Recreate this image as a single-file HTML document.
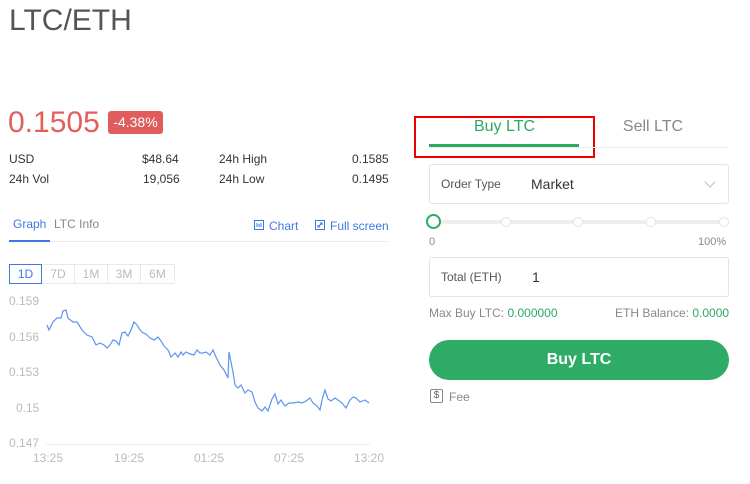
<!DOCTYPE html>
<html><head><meta charset="utf-8"><style>
*{margin:0;padding:0;box-sizing:border-box}
body{width:750px;height:484px;background:#fff;font-family:"Liberation Sans",Arial,sans-serif;position:relative;overflow:hidden;color:#333}
.a{position:absolute;white-space:nowrap}
</style></head><body>
<div class="a" style="left:9px;top:4px;font-size:30px;color:#555">LTC/ETH</div>
<div class="a" style="left:8px;top:106px;font-size:30px;color:#e45e5e">0.1505</div>
<div class="a" style="left:108px;top:111px;width:55px;height:23px;background:#e05d5d;border-radius:3px;color:#fff;font-size:14px;line-height:23px;text-align:center">-4.38%</div>
<div class="a" style="left:9px;top:152px;font-size:12px">USD</div>
<div class="a" style="left:142px;top:152px;font-size:12px">$48.64</div>
<div class="a" style="left:219px;top:152px;font-size:12px">24h High</div>
<div class="a" style="left:352px;top:152px;font-size:12px">0.1585</div>
<div class="a" style="left:9px;top:172px;font-size:12px">24h Vol</div>
<div class="a" style="left:143px;top:172px;font-size:12px">19,056</div>
<div class="a" style="left:219px;top:172px;font-size:12px">24h Low</div>
<div class="a" style="left:352px;top:172px;font-size:12px">0.1495</div>
<div class="a" style="left:13px;top:217px;font-size:12px;color:#3b7be0">Graph</div>
<div class="a" style="left:54px;top:217px;font-size:12px;color:#888">LTC Info</div>
<div class="a" style="left:9px;top:241px;width:380px;height:1px;background:#eee"></div>
<div class="a" style="left:9px;top:240px;width:41px;height:2px;background:#3b7be0"></div>
<svg class="a" style="left:254px;top:220px" width="10" height="10"><rect x="0.5" y="0.5" width="9" height="9" fill="none" stroke="#3b7be0"/><path d="M3 3v4M5 4v3M7 3v4" stroke="#3b7be0"/></svg>
<div class="a" style="left:269px;top:219px;font-size:12px;color:#3b7be0">Chart</div>
<svg class="a" style="left:315px;top:220px" width="10" height="10"><rect x="0.5" y="0.5" width="9" height="9" fill="none" stroke="#3b7be0"/><path d="M3 7l4-4M3 5v2h2M7 5V3H5" stroke="#3b7be0" fill="none"/></svg>
<div class="a" style="left:330px;top:219px;font-size:12px;color:#3b7be0">Full screen</div>
<div class="a" style="left:9px;top:264px;width:166px;height:20px;border:1px solid #e8e8e8;border-radius:2px;display:flex;font-size:12px;color:#bbb;line-height:18px">
<div style="width:33px;text-align:center;border:1px solid #3b7be0;color:#3b7be0;margin:-1px 0 -1px -1px">1D</div>
<div style="width:33px;text-align:center;border-right:1px solid #e8e8e8">7D</div>
<div style="width:33px;text-align:center;border-right:1px solid #e8e8e8">1M</div>
<div style="width:33px;text-align:center;border-right:1px solid #e8e8e8">3M</div>
<div style="width:33px;text-align:center">6M</div></div>
<div class="a" style="left:9px;top:294px;font-size:12px;color:#bbb">0.159</div>
<div class="a" style="left:9px;top:330px;font-size:12px;color:#bbb">0.156</div>
<div class="a" style="left:9px;top:365px;font-size:12px;color:#bbb">0.153</div>
<div class="a" style="left:16px;top:401px;font-size:12px;color:#bbb">0.15</div>
<div class="a" style="left:9px;top:436px;font-size:12px;color:#bbb">0.147</div>
<div class="a" style="left:46px;top:444px;width:324px;height:1px;background:#eee"></div>
<div class="a" style="left:33px;top:451px;font-size:12px;color:#bbb">13:25</div>
<div class="a" style="left:114px;top:451px;font-size:12px;color:#bbb">19:25</div>
<div class="a" style="left:194px;top:451px;font-size:12px;color:#bbb">01:25</div>
<div class="a" style="left:274px;top:451px;font-size:12px;color:#bbb">07:25</div>
<div class="a" style="left:354px;top:451px;font-size:12px;color:#bbb">13:20</div>
<svg class="a" style="left:0;top:0" width="400" height="484"><polyline fill="none" stroke="#5b95ee" stroke-width="1.2" points="47,325 49,330 53,322 57,318 61,318 63,311 66,310 68,318 73,322 77,322 82,330 87,335 92,337 96,345 100,343 104,345 107,348 110,345 113,340 116,341 119,345 122,333 125,332 128,336 131,330 134,322 137,325 140,330 143,333 146,334 150,338 154,340 158,337 161,341 164,346 168,350 171,357 175,353 178,357 181,352 183,355 186,352 190,354 194,355 197,350 200,353 203,353 206,352 210,355 213,350 216,357 220,365 224,370 228,378 229,352 233,372 235,385 238,388 241,385 245,393 248,390 252,392 255,402 258,408 262,411 265,407 268,411 272,399 275,394 278,404 281,400 285,406 289,403 293,403 298,402 302,403 306,401 310,398 313,403 317,406 320,410 322,400 325,390 328,399 331,401 335,398 338,400 342,403 346,408 350,400 353,397 356,398 360,402 365,400 369,403"/></svg>
<div class="a" style="left:414px;top:116px;width:181px;height:42px;border:2px solid #e00"></div>
<div class="a" style="left:430px;top:118px;width:149px;text-align:center;font-size:16px;color:#2aaa62">Buy LTC</div>
<div class="a" style="left:578px;top:118px;width:150px;text-align:center;font-size:16px;color:#888">Sell LTC</div>
<div class="a" style="left:430px;top:147px;width:298px;height:1px;background:#eee"></div>
<div class="a" style="left:429px;top:144px;width:150px;height:3px;background:#2aaa62"></div>
<div class="a" style="left:429px;top:164px;width:300px;height:40px;border:1px solid #e4e4e4;border-radius:3px"></div>
<div class="a" style="left:441px;top:177px;font-size:12px;color:#555">Order Type</div>
<div class="a" style="left:531px;top:176px;font-size:14px;color:#333">Market</div>
<div class="a" style="left:706px;top:178px;width:8px;height:8px;border-right:1px solid #bbb;border-bottom:1px solid #bbb;transform:rotate(45deg)"></div>
<div class="a" style="left:432px;top:220px;width:296px;height:4px;background:#eee;border-radius:2px"></div>
<div class="a" style="left:426px;top:214px;width:15px;height:15px;border:2px solid #2aaa62;border-radius:50%;background:#fff"></div>
<div class="a" style="left:501px;top:217px;width:10px;height:10px;border:1px solid #e4e4e4;border-radius:50%;background:#fff"></div>
<div class="a" style="left:573px;top:217px;width:10px;height:10px;border:1px solid #e4e4e4;border-radius:50%;background:#fff"></div>
<div class="a" style="left:646px;top:217px;width:10px;height:10px;border:1px solid #e4e4e4;border-radius:50%;background:#fff"></div>
<div class="a" style="left:719px;top:217px;width:10px;height:10px;border:1px solid #e4e4e4;border-radius:50%;background:#fff"></div>
<div class="a" style="left:429px;top:236px;font-size:11px;color:#888">0</div>
<div class="a" style="left:698px;top:236px;font-size:11px;color:#888">100%</div>
<div class="a" style="left:429px;top:257px;width:300px;height:40px;border:1px solid #e4e4e4;border-radius:3px"></div>
<div class="a" style="left:441px;top:270px;font-size:12px;color:#555">Total (ETH)</div>
<div class="a" style="left:532px;top:269px;font-size:14px;color:#333">1</div>
<div class="a" style="left:429px;top:306px;font-size:12px;color:#888">Max Buy LTC: <span style="color:#2aaa62">0.000000</span></div>
<div class="a" style="left:615px;top:306px;font-size:12px;color:#888">ETH Balance: <span style="color:#2aaa62">0.0000</span></div>
<div class="a" style="left:429px;top:340px;width:300px;height:40px;background:#2eac66;border-radius:20px;color:#fff;font-size:16px;font-weight:bold;text-align:center;line-height:40px">Buy LTC</div>
<div class="a" style="left:430px;top:389px;width:13px;height:14px;border:1px solid #888;border-radius:2px;font-size:10px;line-height:12px;text-align:center;color:#666">$</div>
<div class="a" style="left:449px;top:390px;font-size:12px;color:#888">Fee</div>
</body></html>
